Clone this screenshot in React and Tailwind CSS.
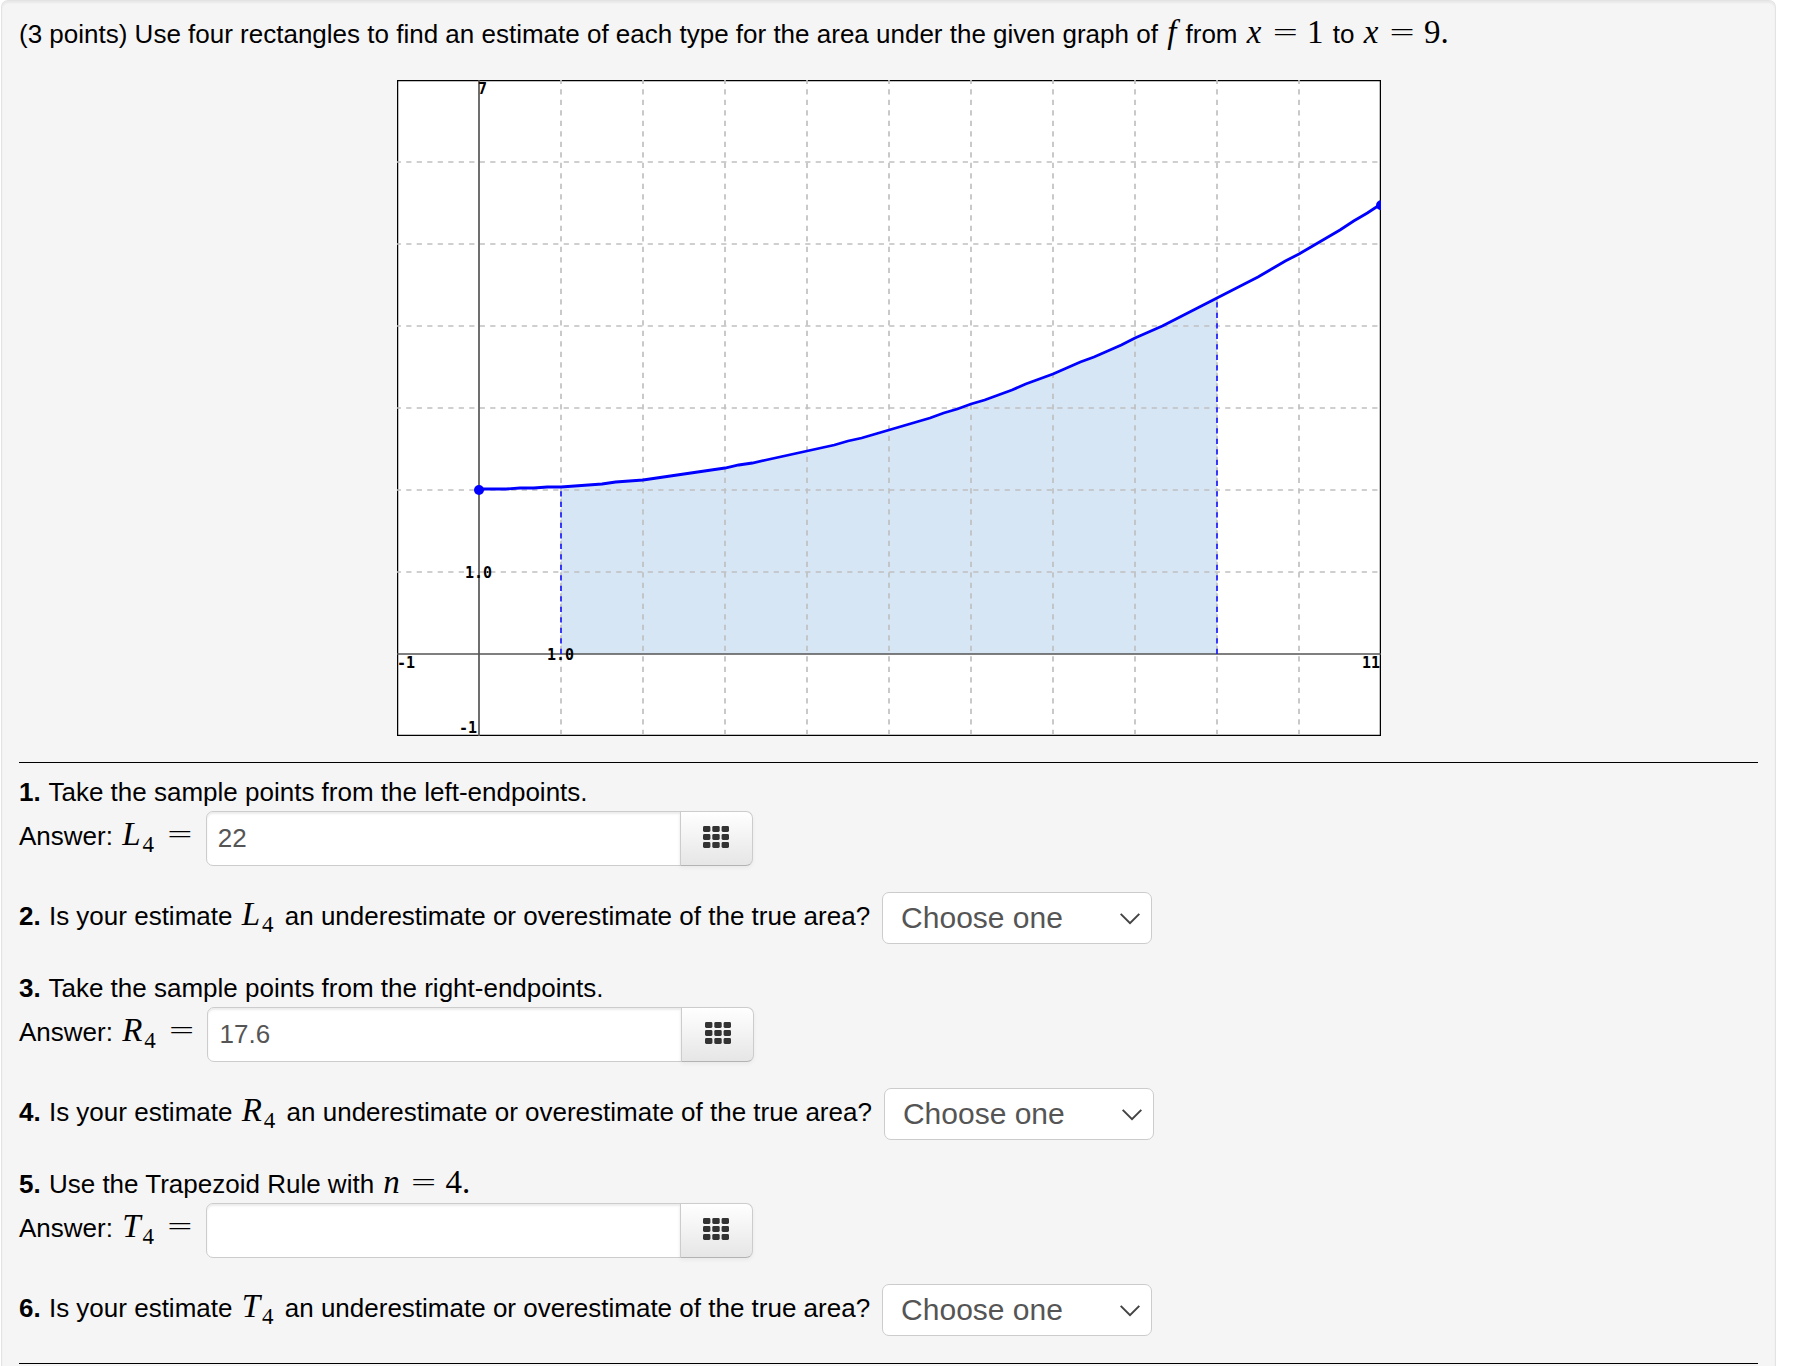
import { useId, useState } from 'react'

const UNIT = 82
const X_MIN = -1
const X_MAX = 11
const Y_MIN = -1
const Y_MAX = 7
const WIDTH = (X_MAX - X_MIN) * UNIT
const HEIGHT = (Y_MAX - Y_MIN) * UNIT

const f = (x) => 2 + 0.0287 * x * x
const px = (x) => (x - X_MIN) * UNIT
const py = (y) => (Y_MAX - y) * UNIT

// Samples f between two x values as an SVG point list
const sample = (from, to, steps) =>
  Array.from({ length: steps + 1 }, (_, i) => {
    const x = from + ((to - from) * i) / steps
    return `${px(x)},${Math.round(py(f(x))) - 1}`
  }).join(' ')

const range = (from, to) => Array.from({ length: to - from + 1 }, (_, i) => from + i)

const QUESTIONS = [
  { symbol: 'L', title: 'Take the sample points from the left-endpoints.', initial: '22' },
  { symbol: 'R', title: 'Take the sample points from the right-endpoints.', initial: '17.6' },
  {
    symbol: 'T',
    title: (
      <>
        Use the Trapezoid Rule with <Var>n</Var>
        <Equals />
        <Num>4.</Num>
      </>
    ),
    initial: '',
  },
]

function Var({ children }) {
  return (
    <i className="mx-0.5 font-['Liberation_Serif',serif] text-[33px] leading-none">{children}</i>
  )
}

function Num({ children }) {
  return (
    <span className="mr-0.5 font-['Liberation_Serif',serif] text-[33px] leading-none">
      {children}
    </span>
  )
}

function Equals() {
  return (
    <span className="mx-2 font-['DejaVu_Sans',sans-serif] text-[33px] leading-[28px] font-extralight">
      =
    </span>
  )
}

function Estimate({ symbol }) {
  return (
    <>
      <Var>{symbol}</Var>
      <sub className="bottom-[-7px] mr-1 font-['Liberation_Serif',serif] text-[23px]">4</sub>
    </>
  )
}

function Graph() {
  return (
    <svg
      className="block h-auto w-full max-w-[984px]"
      viewBox={`0 0 ${WIDTH} ${HEIGHT}`}
      role="img"
      aria-label="Graph of f"
    >
      <rect width={WIDTH} height={HEIGHT} fill="#fff" />
      <polygon
        points={`${px(1)},${py(0)} ${sample(1, 9, 48)} ${px(9)},${py(0)}`}
        fill="#d6e6f4"
      />
      <rect
        x="0.5"
        y="0.5"
        width={WIDTH - 1}
        height={HEIGHT - 1}
        fill="none"
        stroke="#000"
        strokeWidth="1.5"
      />

      <g stroke="#c0c0c0" strokeWidth="1.7" strokeDasharray="5.25 5.25" strokeDashoffset="1.3">
        {range(1, 10).map((x) => (
          <line key={x} x1={px(x)} x2={px(x)} y1="0" y2={HEIGHT} />
        ))}
        {range(1, 6).map((y) => (
          <line key={y} x1="0" x2={WIDTH} y1={py(y)} y2={py(y)} />
        ))}
      </g>

      <g stroke="#555" strokeWidth="1.7">
        <line x1={px(0)} x2={px(0)} y1="0" y2={HEIGHT} />
        <line x1="0" x2={WIDTH} y1={py(0)} y2={py(0)} />
      </g>

      <g stroke="#1a1aff" strokeWidth="1.7" strokeDasharray="5.25 5.25">
        {[1, 9].map((x) => (
          <line key={x} x1={px(x)} x2={px(x)} y1={py(0)} y2={py(f(x))} />
        ))}
      </g>

      <polyline points={sample(0, 11, 66)} fill="none" stroke="#00f" strokeWidth="2.8" />
      <circle cx={px(0)} cy={py(f(0))} r="5" fill="#00f" />
      <circle cx={px(11)} cy={py(f(11))} r="5" fill="#00f" />

      <g className="font-['DejaVu_Sans_Mono',monospace] text-[15px] font-bold" fill="#000">
        <text x="81" y="14">7</text>
        <text x="68" y="498">1.0</text>
        <text x="150" y="580">1.0</text>
        <text x="0" y="588">-1</text>
        <text x="62" y="653">-1</text>
        <text x="965" y="588">11</text>
      </g>
    </svg>
  )
}

function GridIcon() {
  return (
    <svg width="26" height="22" viewBox="0 0 26 22" fill="#333" aria-hidden="true">
      {[0, 8, 16].map((y) =>
        [0, 9.3, 18.6].map((x) => (
          <rect key={`${x}-${y}`} x={x} y={y} width="7.4" height="6" rx="1.4" />
        )),
      )}
    </svg>
  )
}

function AnswerField({ symbol, initial }) {
  const id = useId()
  const [value, setValue] = useState(initial)

  return (
    <div className="flex items-start">
      <label htmlFor={id} className="mr-1 h-[55px] leading-[50px] whitespace-nowrap">
        Answer: <Estimate symbol={symbol} />
        <Equals />
      </label>
      <input
        id={id}
        type="text"
        value={value}
        onChange={(e) => setValue(e.target.value)}
        className="h-[55px] w-[475px] rounded-l-[7px] border border-[#ccc] bg-white px-[11px] text-[26px] text-[#555] shadow-[inset_0_2px_2px_rgba(0,0,0,0.075)] outline-none"
      />
      <button
        type="button"
        aria-label="Open equation editor"
        className="-ml-px flex h-[55px] w-[73px] items-center justify-center rounded-r-[7px] border border-[#ccc] border-b-[#b3b3b3] bg-linear-to-b from-white to-[#e6e6e6] pb-1 shadow-[0_2px_4px_rgba(0,0,0,0.05)]"
      >
        <GridIcon />
      </button>
    </div>
  )
}

function EstimateSelect({ number, symbol }) {
  const id = useId()

  return (
    <div className="flex items-start">
      <label htmlFor={id} className="mr-3 h-[52px] leading-[48px] whitespace-nowrap">
        <b className="mr-px">{number}.</b> Is your estimate <Estimate symbol={symbol} /> an
        underestimate or overestimate of the true area?
      </label>
      <div className="relative">
        <select
          id={id}
          className="h-[52px] w-[270px] appearance-none rounded-[7px] border border-[#ccc] bg-white pl-[18px] text-[30px] leading-none text-[#555] outline-none"
        >
          <option>Choose one</option>
          <option>Underestimate</option>
          <option>Overestimate</option>
        </select>
        <svg
          className="pointer-events-none absolute top-[21px] right-3"
          width="20"
          height="12"
          viewBox="0 0 20 12"
          fill="none"
          stroke="#444"
          strokeWidth="2"
          aria-hidden="true"
        >
          <path d="M0.7 0.9 L10 10.2 L19.3 0.9" />
        </svg>
      </div>
    </div>
  )
}

export default function App() {
  return (
    <div className="flex min-h-screen bg-white pr-[18px] pl-px font-['Liberation_Sans',Arial,sans-serif] text-[26px] leading-[37px] text-black">
      <main className="flex-1 rounded-t-[7px] border border-b-0 border-[#e3e3e3] bg-[#f5f5f5] px-[17px] pt-[15px] shadow-[inset_0_2px_2px_rgba(0,0,0,0.05)]">
        <p>
          (3 points) Use four rectangles to find an estimate of each type for the area under the
          given graph of <Var>f</Var> from <Var>x</Var>
          <Equals />
          <Num>1</Num> to <Var>x</Var>
          <Equals />
          <Num>9.</Num>
        </p>

        <div className="mt-[27px] flex justify-center">
          <Graph />
        </div>

        <hr className="mt-[26px] mb-[11px] border-black" />

        <div className="flex flex-col gap-[26px]">
          {QUESTIONS.map(({ symbol, title, initial }, i) => (
            <section key={symbol} className="flex flex-col gap-[26px]">
              <div>
                <p>
                  <b className="mr-px">{i * 2 + 1}.</b> {title}
                </p>
                <AnswerField symbol={symbol} initial={initial} />
              </div>
              <EstimateSelect number={i * 2 + 2} symbol={symbol} />
            </section>
          ))}
        </div>

        <hr className="mt-[27px] border-black" />
      </main>
    </div>
  )
}
